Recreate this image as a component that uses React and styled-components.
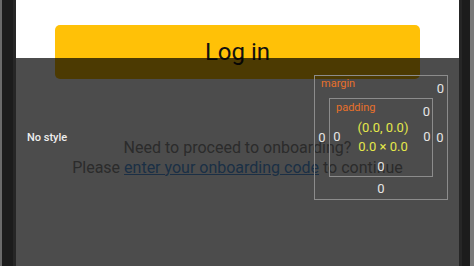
import React from "react";
import styled, { createGlobalStyle } from "styled-components";

const Global = createGlobalStyle`
  html, body {
    margin: 0;
    padding: 0;
    background: #2a2a2a;
    font-family: Roboto, "Noto Sans", Arial, sans-serif;
  }
`;

const Device = styled.div`
  display: flex;
  height: 266px;
  width: 474px;
  background: #1c1c1c;
  border-left: 2px solid #6a6a6a;
  border-right: 4px solid #7a7a7a;
  box-sizing: border-box;
  padding: 0 11px 0 14px;
  overflow: hidden;
`;

const Screen = styled.div`
  position: relative;
  flex: 1;
  background: #ffffff;
  display: flex;
  flex-direction: column;
  align-items: center;
  box-shadow: -3px 0 0 #262626, 3px 0 0 #262626;
`;

const LoginButton = styled.button`
  align-self: stretch;
  margin: 25px 39px 0;
  height: 54px;
  border: none;
  border-radius: 5px;
  background: #ffc107;
  color: #111;
  font-family: Roboto, sans-serif;
  font-size: 24px;
  padding: 0;
`;

const Message = styled.p`
  margin: 59px 0 0;
  text-align: center;
  font-size: 16px;
  line-height: 20px;
  color: #909090;
`;

const Link = styled.a`
  color: #5b9fe6;
  text-decoration: underline;
`;

const Overlay = styled.div`
  position: absolute;
  left: 0;
  right: 0;
  top: 58px;
  bottom: 0;
  background: rgba(0, 0, 0, 0.7);
  display: flex;
  align-items: flex-start;
  padding: 17px 11px 0;
`;

const StyleLabel = styled.span`
  margin-top: 56px;
  font-size: 11px;
  font-weight: 500;
  color: #eeeeee;
  flex: 1;
`;

const BoxModel = styled.div`
  width: 134px;
  height: 125px;
  box-sizing: border-box;
  border: 1px solid #8c8c8c;
  display: grid;
  grid-template-columns: 14px 1fr 14px;
  grid-template-rows: 22px 1fr 22px;
  color: #e6e6e6;
  font-size: 13px;
`;

const Head = styled.div`
  grid-column: 1 / -1;
  display: flex;
  justify-content: space-between;
  align-items: flex-start;
  padding: ${(p) => (p.$inner ? "2px 2px 0 6px" : "1px 3px 0 6px")};
`;

const Title = styled.span`
  color: #e8702a;
  font-size: 11px;
  line-height: 14px;
`;

const Num = styled.span`
  color: #e6e6e6;
  line-height: 14px;
  margin-top: ${(p) => p.$drop || 0}px;
`;

const Side = styled.div`
  display: flex;
  align-items: center;
  justify-content: center;
  color: #e6e6e6;
`;

const Foot = styled.div`
  grid-column: 1 / -1;
  display: flex;
  justify-content: center;
  align-items: center;
  color: #e6e6e6;
`;

const Inner = styled.div`
  border: 1px solid #8c8c8c;
  display: grid;
  grid-template-columns: 14px 1fr 10px;
  grid-template-rows: 18px 1fr 20px;
`;

const Size = styled.div`
  display: flex;
  flex-direction: column;
  align-items: center;
  justify-content: center;
  color: #e4e84a;
  font-size: 13px;
  line-height: 19px;
`;

export default function App() {
  return (
    <>
      <Global />
      <Device>
        <Screen>
          <LoginButton>Log in</LoginButton>
          <Message>
            Need to proceed to onboarding?
            <br />
            Please <Link>enter your onboarding code</Link> to continue
          </Message>
          <Overlay>
            <StyleLabel>No style</StyleLabel>
            <BoxModel>
              <Head>
                <Title>margin</Title>
                <Num $drop={5}>0</Num>
              </Head>
              <Side>0</Side>
              <Inner>
                <Head $inner>
                  <Title>padding</Title>
                  <Num $drop={4}>0</Num>
                </Head>
                <Side>0</Side>
                <Size>
                  <span>(0.0, 0.0)</span>
                  <span>0.0 × 0.0</span>
                </Size>
                <Side>0</Side>
                <Foot>0</Foot>
              </Inner>
              <Side>0</Side>
              <Foot>0</Foot>
            </BoxModel>
          </Overlay>
        </Screen>
      </Device>
    </>
  );
}
